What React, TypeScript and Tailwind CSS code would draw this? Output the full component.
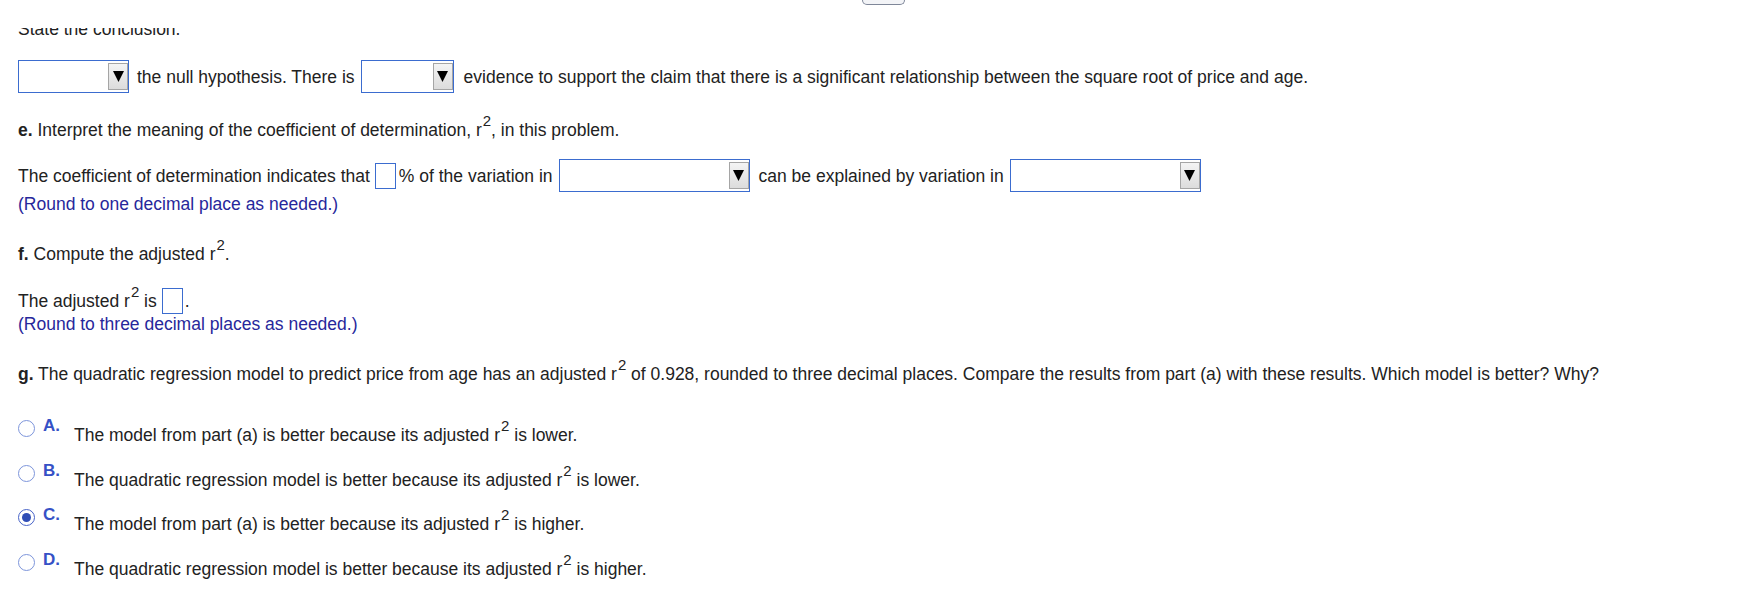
import type { ReactNode } from "react";

const Sup = () => (
  <span className="relative -top-[10px] ml-[1px] text-[15px] leading-none">2</span>
);

function Select({ className }: { className: string }) {
  return (
    <span
      className={`flex h-[33px] shrink-0 items-center justify-end border border-[#3b6ccf] bg-white ${className}`}
    >
      <span className="flex h-[27px] w-[20px] items-center justify-center border border-[#a5a5a5] bg-gradient-to-b from-[#f4f4f4] to-[#dcdcdc]">
        <svg width="11" height="11" viewBox="0 0 11 11">
          <path d="M0 0H11L5.5 11Z" fill="#000" />
        </svg>
      </span>
    </span>
  );
}

const Box = ({ className }: { className: string }) => (
  <span className={`h-[26px] w-[21px] shrink-0 border border-[#3b6ccf] bg-white ${className}`} />
);

function Radio({ checked }: { checked?: boolean }) {
  return (
    <span
      className={`flex h-[17px] w-[17px] shrink-0 items-center justify-center rounded-full border-[1.5px] bg-white ${
        checked ? "border-[#4763c8]" : "border-[#7d95db]"
      }`}
    >
      {checked && <span className="h-[9px] w-[9px] rounded-full bg-[#2f4db6]" />}
    </span>
  );
}

function Option({ letter, checked, children }: { letter: string; checked?: boolean; children: ReactNode }) {
  return (
    <div className="flex h-[44.5px] items-start">
      <span className="mt-[2px]">
        <Radio checked={checked} />
      </span>
      <span className="ml-[8px] w-[31px] text-[17px] font-bold leading-[16px] text-[#3651c6]">{letter}</span>
      <span className="mt-[7px] leading-[20px]">{children}</span>
    </div>
  );
}

export default function App() {
  return (
    <div className="relative h-[595px] w-full overflow-hidden bg-white font-['Liberation_Sans',Arial,sans-serif] text-[17.5px] text-[#222]">
      {/* sticky toolbar covering the top of the question */}
      <div className="absolute inset-x-0 top-0 z-10 flex h-[28px] bg-white pl-[862px]">
        <div className="h-[5px] w-[43px] rounded-b-[6px] border-x border-b border-[#7f8799] bg-[#f3f4f7]" />
      </div>

      <div className="flex flex-col pl-[18px] pt-[19px]">
        <p className="leading-[20px]">State the conclusion.</p>

        <div className="mt-[21px] flex h-[33px] items-center leading-[20px]">
          <Select className="w-[111px]" />
          <span className="ml-[8px]">the null hypothesis. There is</span>
          <Select className="ml-[6px] w-[93px]" />
          <span className="ml-[10px]">
            evidence to support the claim that there is a significant relationship between the square root of price and age.
          </span>
        </div>

        <p className="mt-[27px] leading-[20px]">
          <b>e.</b> Interpret the meaning of the coefficient of determination, r<Sup />, in this problem.
        </p>

        <div className="mt-[19px] flex h-[33px] items-center leading-[20px]">
          <span>The coefficient of determination indicates that</span>
          <Box className="ml-[5px]" />
          <span className="ml-[3px]">% of the variation in</span>
          <Select className="ml-[6px] w-[191px]" />
          <span className="ml-[9px]">can be explained by variation in</span>
          <Select className="ml-[6px] w-[191px]" />
        </div>
        <p className="mt-[2px] leading-[20px] text-[#27279b]">(Round to one decimal place as needed.)</p>

        <p className="mt-[30px] leading-[20px]">
          <b>f.</b> Compute the adjusted r<Sup />.
        </p>

        <div className="mt-[24px] flex h-[26px] items-center leading-[20px]">
          <span>
            The adjusted r<Sup /> is
          </span>
          <Box className="ml-[5px] w-[20px]" />
          <span className="ml-[2px]">.</span>
        </div>
        <p className="leading-[20px] text-[#27279b]">(Round to three decimal places as needed.)</p>

        <p className="mt-[30px] leading-[20px]">
          <b>g.</b> The quadratic regression model to predict price from age has an adjusted r<Sup /> of 0.928, rounded to three
          decimal places. Compare the results from part (a) with these results. Which model is better? Why?
        </p>

        <div className="mt-[34px] flex flex-col">
          <Option letter="A.">
            The model from part (a) is better because its adjusted r<Sup /> is lower.
          </Option>
          <Option letter="B.">
            The quadratic regression model is better because its adjusted r<Sup /> is lower.
          </Option>
          <Option letter="C." checked>
            The model from part (a) is better because its adjusted r<Sup /> is higher.
          </Option>
          <Option letter="D.">
            The quadratic regression model is better because its adjusted r<Sup /> is higher.
          </Option>
        </div>
      </div>
    </div>
  );
}
